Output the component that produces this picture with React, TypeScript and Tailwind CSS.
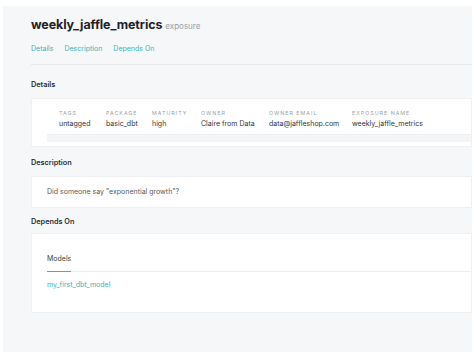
import React from "react";

const cols = [
  { label: "TAGS", value: "untagged", w: "w-[47px]" },
  { label: "PACKAGE", value: "basic_dbt", w: "w-[46px]" },
  { label: "MATURITY", value: "high", w: "w-[49px]" },
  { label: "OWNER", value: "Claire from Data", w: "w-[68px]" },
  { label: "OWNER EMAIL", value: "data@jaffleshop.com", w: "w-[83px]" },
  { label: "EXPOSURE NAME", value: "weekly_jaffle_metrics", w: "w-[110px]" },
];

export default function App() {
  return (
    <div
      className="w-[474px] h-[355px] bg-white overflow-hidden pt-[6px] pl-[3px]"
      style={{ fontFamily: "Inter, 'Liberation Sans', sans-serif" }}
    >
      <div className="w-[469px] h-[346px] bg-[#f6f7f9] overflow-hidden pl-[28px] pt-[10px]">
        <div className="border-b border-[#e6e8eb] pb-[9px]">
          <div className="flex items-baseline h-[18px] leading-[18px]">
            <span className="text-[12.5px] font-bold text-[#1f2328] tracking-[-0.1px]">
              weekly_jaffle_metrics
            </span>
            <span className="ml-[3px] text-[8px] text-[#9aa0a6]">exposure</span>
          </div>
          <div className="mt-[9px] flex gap-[11px] text-[7px] leading-[12px] text-[#3eb3b8]">
            <span>Details</span>
            <span>Description</span>
            <span>Depends On</span>
          </div>
        </div>

        <div className="mt-[14px] text-[7.3px] leading-[12px] font-semibold text-[#2a2e33]">Details</div>
        <div className="mt-[7px] bg-white border border-[#eef0f2] rounded-l-[2px] pt-[10px] pb-[4px] pl-[15px]">
          <div className="flex">
            {cols.map((c) => (
              <div key={c.label} className={`${c.w} shrink-0 pl-[12px]`}>
                <div className="text-[5.3px] leading-[8px] tracking-[1px] text-[#9a9fa5] whitespace-nowrap">{c.label}</div>
                <div className="mt-[2px] text-[7px] leading-[10px] text-[#30353a] whitespace-nowrap">{c.value}</div>
              </div>
            ))}
          </div>
          <div className="mt-[5px] h-[8px] border-t border-[#eceef0] bg-[#f4f5f7]" />
        </div>

        <div className="mt-[10px] text-[7.3px] leading-[12px] font-semibold text-[#2a2e33]">Description</div>
        <div className="mt-[7px] bg-white border border-[#eef0f2] py-[9px] pl-[15px] text-[7px] leading-[12px] text-[#555a60]">
          Did someone say "exponential growth"?
        </div>

        <div className="mt-[8px] text-[7.3px] leading-[12px] font-semibold text-[#2a2e33]">Depends On</div>
        <div className="mt-[5px] bg-white border border-[#eef0f2] pt-[19px] pb-[21px] pl-[15px]">
          <div className="flex border-b border-[#eceef0]">
            <div className="border-b-[1.5px] border-[#3eb3b8] pb-[6px] text-[7px] leading-[12px] text-[#3a3f44] -mb-px">
              Models
            </div>
          </div>
          <div className="mt-[7px] text-[7px] leading-[12px] text-[#3eb3b8]">my_first_dbt_model</div>
        </div>
      </div>
    </div>
  );
}
